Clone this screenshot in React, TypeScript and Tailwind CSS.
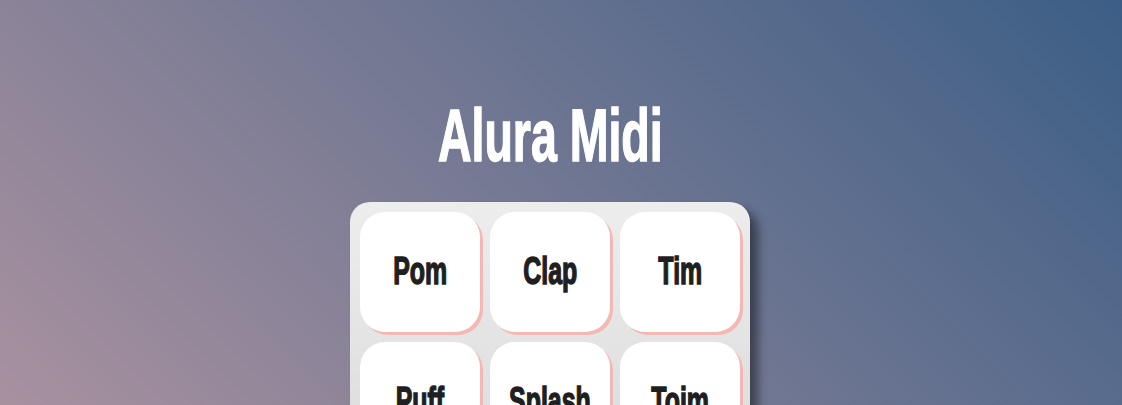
const keys = ["Pom", "Clap", "Tim", "Puff", "Splash", "Toim", "Psh", "Tic", "Tom"];

export default function App() {
  return (
    <main className="min-h-screen pr-[22px] bg-fixed bg-[linear-gradient(45deg,#a8919f,#3c5e86)] flex flex-col items-center font-['Liberation_Sans',Arial,sans-serif]">
      <h1 className="pt-[98px] mb-[29px] text-[75px] leading-none font-bold text-white">
        <span className="inline-block scale-x-[0.62] [-webkit-text-stroke:1.5px_#ffffff]">Alura Midi</span>
      </h1>
      <section className="grid grid-cols-[repeat(3,120px)] gap-[10px] p-[10px] rounded-[20px] bg-[linear-gradient(to_bottom,#ededed,#d2d2d2)] shadow-[8px_8px_10px_rgba(0,0,0,0.45)]">
        {keys.map((k) => (
          <button
            key={k}
            type="button"
            className="h-[120px] w-[120px] rounded-[25px] bg-white shadow-[3px_3px_0_#f3b8b3] flex items-center justify-center pb-1 text-[39px] font-bold leading-none text-[#1f1f1f]"
          >
            <span className="inline-block scale-x-[0.64] [-webkit-text-stroke:1.5px_#1f1f1f]">{k}</span>
          </button>
        ))}
      </section>
    </main>
  );
}
